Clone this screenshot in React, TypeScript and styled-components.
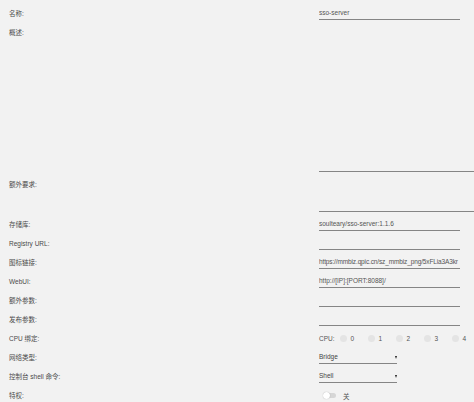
import styled, { createGlobalStyle } from 'styled-components'

const GlobalStyle = createGlobalStyle`
  html, body {
    margin: 0;
    padding: 0;
    overflow: hidden;
    background: #f2f2f2;
  }
  body {
    font-family: 'Liberation Sans', 'Noto Sans CJK SC', sans-serif;
  }
`

const Form = styled.div`
  display: grid;
  grid-template-columns: 310px 1fr;
  row-gap: 6px;
  padding: 7px 0 0 9px;
  width: 465px;
  box-sizing: border-box;
  border-top: 2px solid #f7f7f7;
  margin-top: -2px;
`

const Label = styled.label`
  font-size: 6.5px;
  line-height: 13px;
  color: #4a4a4a;
  white-space: nowrap;
`

// single-line field, shown as text over an underline
const TextInput = styled.div<{ $tight?: boolean }>`
  width: 141px;
  height: 13px;
  box-sizing: border-box;
  border-bottom: 1px solid #858585;
  font-size: 6.5px;
  line-height: 12px;
  letter-spacing: ${p => (p.$tight ? '-0.13px' : '0')};
  color: #555;
  white-space: nowrap;
  overflow: hidden;
`

const TextArea = styled.div<{ $h: number }>`
  width: 100%;
  height: ${p => p.$h}px;
  box-sizing: border-box;
  border-bottom: 1px solid #858585;
`

const RadioRow = styled.div`
  display: flex;
  align-items: center;
  height: 13px;
  font-size: 6.5px;
  color: #555;
`

const CpuTag = styled.span`
  margin-right: 5px;
`

const RadioItem = styled.span`
  display: flex;
  align-items: center;
  gap: 4px;
  width: 28px;
`

const Dot = styled.span`
  width: 7px;
  height: 7px;
  border-radius: 50%;
  background: #e4e4e4;
`

const Select = styled.div`
  position: relative;
  width: 78px;
  height: 13px;
  box-sizing: border-box;
  border-bottom: 1px solid #858585;
  font-size: 6.5px;
  line-height: 12px;
  color: #444;
`

const Arrow = styled.span`
  position: absolute;
  right: 0;
  top: 5px;
  width: 0;
  height: 0;
  border-left: 1.5px solid transparent;
  border-right: 1.5px solid transparent;
  border-top: 3px solid #222;
`

const SwitchRow = styled.div`
  display: flex;
  align-items: center;
  gap: 7px;
  height: 13px;
  padding-left: 5px;
  font-size: 6.5px;
  color: #555;
`

const Track = styled.span`
  position: relative;
  width: 12px;
  height: 5px;
  border-radius: 3px;
  background: #d6d6d6;
`

const Knob = styled.span`
  position: absolute;
  left: -1px;
  top: -1px;
  width: 7px;
  height: 7px;
  border-radius: 50%;
  background: #fff;
  box-shadow: 0 0 1px rgba(0, 0, 0, 0.35);
`

const cpus = ['0', '1', '2', '3', '4']

const App = () => {
  return (
    <>
      <GlobalStyle />
      <Form>
        <Label>名称:</Label>
        <TextInput>sso-server</TextInput>

        <Label>概述:</Label>
        <TextArea $h={146} />

        <Label>额外要求:</Label>
        <TextArea $h={34} />

        <Label>存储库:</Label>
        <TextInput>soulteary/sso-server:1.1.6</TextInput>

        <Label>Registry URL:</Label>
        <TextInput />

        <Label>图标链接:</Label>
        <TextInput $tight>https://mmbiz.qpic.cn/sz_mmbiz_png/5xFLia3A3kr</TextInput>

        <Label>WebUI:</Label>
        <TextInput>http://[IP]:[PORT:8088]/</TextInput>

        <Label>额外参数:</Label>
        <TextInput />

        <Label>发布参数:</Label>
        <TextInput />

        <Label>CPU 绑定:</Label>
        <RadioRow>
          <CpuTag>CPU:</CpuTag>
          {cpus.map(c => (
            <RadioItem key={c}>
              <Dot />
              {c}
            </RadioItem>
          ))}
        </RadioRow>

        <Label>网络类型:</Label>
        <Select>
          Bridge
          <Arrow />
        </Select>

        <Label>控制台 shell 命令:</Label>
        <Select>
          Shell
          <Arrow />
        </Select>

        <Label>特权:</Label>
        <SwitchRow>
          <Track>
            <Knob />
          </Track>
          关
        </SwitchRow>
      </Form>
    </>
  )
}

export default App
